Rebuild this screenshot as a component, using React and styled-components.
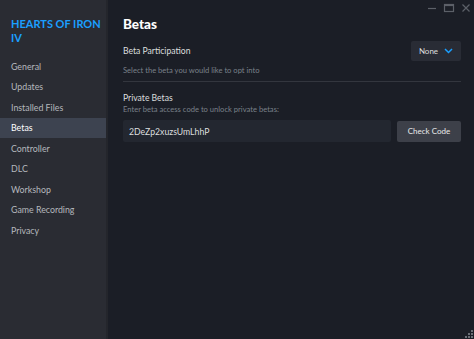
import React from "react";
import styled, { createGlobalStyle } from "styled-components";

const GlobalStyle = createGlobalStyle`
  html, body {
    margin: 0;
    padding: 0;
    background: #1b1e26;
  }
  body {
    font-family: Lato, "Noto Sans", Arial, sans-serif;
  }
`;

const Window = styled.div`
  position: relative;
  width: 474px;
  height: 339px;
  display: grid;
  grid-template-columns: 108px 1fr;
  background: #1b1e26;
  overflow: hidden;
`;

const Sidebar = styled.nav`
  background: #2a2c33;
  border-right: 2px solid #24262c;
  display: flex;
  flex-direction: column;
`;

const GameTitle = styled.div`
  margin: 17px 0 11px;
  padding: 0 0 0 11px;
  color: #1a9fff;
  font-size: 11px;
  font-weight: 700;
  line-height: 14px;
  white-space: nowrap;
`;

const NavItem = styled.div`
  height: 20.5px;
  display: flex;
  align-items: center;
  padding: 0 11px;
  font-size: 8.8px;
  color: ${(p) => (p.$active ? "#ffffff" : "#b5b8bd")};
  background: ${(p) => (p.$active ? "#3d4350" : "transparent")};
`;

const Main = styled.main`
  display: flex;
  flex-direction: column;
  padding: 0 13px 0 15px;
`;

const Heading = styled.h1`
  margin: 14px 0 0;
  font-size: 13.5px;
  line-height: 20px;
  font-weight: 900;
  color: #ffffff;
`;

const Row = styled.div`
  display: flex;
  align-items: center;
  justify-content: space-between;
  margin-top: ${(p) => p.$top || 0}px;
`;

const Label = styled.div`
  font-size: 8.6px;
  color: #dcdedf;
  line-height: 11px;
  margin-top: ${(p) => p.$top || 0}px;
`;

const Hint = styled.div`
  font-size: 7.6px;
  color: #7a8089;
  line-height: ${(p) => p.$lh || 11}px;
  margin-top: ${(p) => p.$top || 0}px;
`;

const Dropdown = styled.div`
  height: 20px;
  width: 50px;
  box-sizing: border-box;
  display: flex;
  align-items: center;
  justify-content: center;
  gap: 6px;
  background: #292c35;
  border-radius: 2px;
  font-size: 8px;
  color: #dcdedf;
`;

const Divider = styled.div`
  height: 1px;
  background: #33363e;
  margin-top: 4px;
`;

const CodeInput = styled.div`
  flex: 1;
  height: 22px;
  display: flex;
  align-items: center;
  padding: 0 6px;
  background: #232730;
  border-radius: 2px;
  font-size: 8.7px;
  color: #dcdedf;
`;

const Button = styled.div`
  width: 64px;
  height: 21px;
  margin-left: 6px;
  display: flex;
  align-items: center;
  justify-content: center;
  background: #3d4049;
  border-radius: 2px;
  font-size: 8px;
  color: #e8e9ea;
`;

const Controls = styled.div`
  position: absolute;
  top: 2px;
  right: 2px;
  display: flex;
  gap: 5px;
  align-items: center;
`;

const Grip = styled.svg`
  position: absolute;
  right: 1px;
  bottom: 1px;
`;

const navItems = [
  "General",
  "Updates",
  "Installed Files",
  "Betas",
  "Controller",
  "DLC",
  "Workshop",
  "Game Recording",
  "Privacy",
];

const App = () => {
  return (
    <Window>
      <GlobalStyle />
      <Sidebar>
        <GameTitle>
          HEARTS OF IRON
          <br />
          IV
        </GameTitle>
        {navItems.map((item) => (
          <NavItem key={item} $active={item === "Betas"}>
            {item}
          </NavItem>
        ))}
      </Sidebar>
      <Main>
        <Heading>Betas</Heading>
        <Row $top={7}>
          <Label>Beta Participation</Label>
          <Dropdown>
            None
            <svg width="9" height="6" viewBox="0 0 9 6">
              <path d="M1 1l3.5 3.5L8 1" fill="none" stroke="#1a9fff" strokeWidth="1.5" />
            </svg>
          </Dropdown>
        </Row>
        <Hint $lh={14} $top={2}>Select the beta you would like to opt into</Hint>
        <Divider />
        <Label $top={11}>Private Betas</Label>
        <Hint>Enter beta access code to unlock private betas:</Hint>
        <Row $top={5}>
          <CodeInput>2DeZp2xuzsUmLhhP</CodeInput>
          <Button>Check Code</Button>
        </Row>
      </Main>
      <Controls>
        <svg width="12" height="12" viewBox="0 0 12 12">
          <path d="M2 6.5h8" stroke="#5c6068" strokeWidth="1.2" />
        </svg>
        <svg width="12" height="12" viewBox="0 0 12 12">
          <rect x="1.5" y="2.5" width="9" height="7" fill="none" stroke="#5c6068" strokeWidth="1.2" />
          <path d="M1.5 3.5h9" stroke="#5c6068" strokeWidth="1.2" />
        </svg>
        <svg width="12" height="12" viewBox="0 0 12 12">
          <path d="M2.5 2.5l7 7M9.5 2.5l-7 7" stroke="#5c6068" strokeWidth="1.2" />
        </svg>
      </Controls>
      <Grip width="8" height="8" viewBox="0 0 8 8">
        <rect x="6" y="0" width="2" height="2" fill="#6a6e75" />
        <rect x="3" y="3" width="2" height="2" fill="#6a6e75" />
        <rect x="6" y="3" width="2" height="2" fill="#6a6e75" />
        <rect x="0" y="6" width="2" height="2" fill="#6a6e75" />
        <rect x="3" y="6" width="2" height="2" fill="#6a6e75" />
        <rect x="6" y="6" width="2" height="2" fill="#6a6e75" />
      </Grip>
    </Window>
  );
};

export default App;
